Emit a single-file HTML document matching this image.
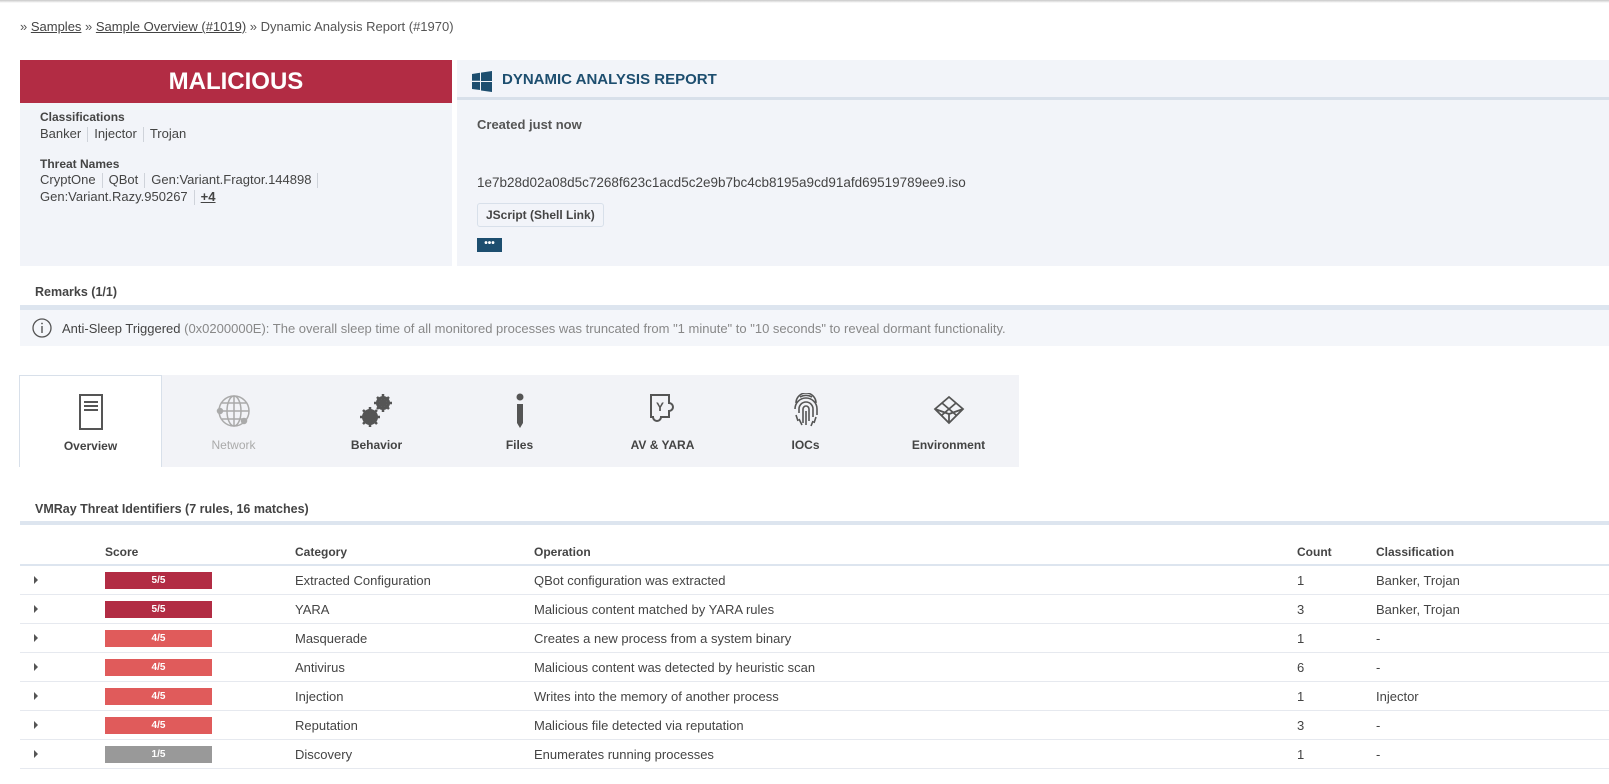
<!DOCTYPE html>
<html><head><meta charset="utf-8"><style>
*{margin:0;padding:0;box-sizing:border-box}
body{width:1609px;height:784px;overflow:hidden;background:#fff;font-family:"Liberation Sans",Arial,sans-serif;color:#444;position:relative;font-size:12px}
.a{position:absolute;white-space:nowrap}
.topsh{position:absolute;left:0;top:0;width:1609px;height:3px;background:linear-gradient(#c8c8c8,#fff)}
a{color:#444}
.sep{display:inline-block;width:1px;height:15px;background:#cfd3da;vertical-align:middle;margin:0 6px}
.b{font-weight:bold}
.tab{position:absolute;top:375px;height:92px;width:143px;text-align:center;font-size:12px;color:#444;font-weight:bold}
.tab svg{position:absolute;left:50%;transform:translateX(-50%);top:18px}
.tab span{position:absolute;left:0;right:0;top:63px}
.row{position:absolute;left:20px;width:1589px;height:29px;border-bottom:1px solid #e6e9ef;font-size:13px;color:#444}
.row div{position:absolute;top:7px;white-space:nowrap}
.sc{top:6px!important;left:85px;width:107px;height:17px;color:#fff;font-size:10px;font-weight:bold;text-align:center;line-height:17px}
.arr{left:14px;top:10px!important;width:0;height:0;border-left:4px solid #555;border-top:4px solid transparent;border-bottom:4px solid transparent}
</style></head><body>
<div class="topsh"></div>
<div class="a" style="left:20px;top:19px;font-size:13px;color:#555">» <a href="#">Samples</a> » <a href="#">Sample Overview (#1019)</a> » Dynamic Analysis Report (#1970)</div>

<div class="a" style="left:20px;top:60px;width:432px;height:206px;background:#f2f4f9"></div>
<div class="a" style="left:20px;top:60px;width:432px;height:43px;background:#b22c44;color:#fff;font-size:24px;font-weight:bold;text-align:center;line-height:43px">MALICIOUS</div>
<div class="a b" style="left:40px;top:110px;font-size:12px">Classifications</div>
<div class="a" style="left:40px;top:126px;font-size:13px">Banker<span class="sep"></span>Injector<span class="sep"></span>Trojan</div>
<div class="a b" style="left:40px;top:157px;font-size:12px">Threat Names</div>
<div class="a" style="left:40px;top:172px;font-size:13px">CryptOne<span class="sep"></span>QBot<span class="sep"></span>Gen:Variant.Fragtor.144898<span class="sep"></span></div>
<div class="a" style="left:40px;top:189px;font-size:13px">Gen:Variant.Razy.950267<span class="sep"></span><a href="#" class="b">+4</a></div>

<div class="a" style="left:457px;top:60px;width:1152px;height:206px;background:#f2f4f9"></div>
<div class="a" style="left:457px;top:97px;width:1152px;height:3px;background:#d8e0ea"></div>
<svg class="a" style="left:472px;top:71px" width="20" height="21" viewBox="0 0 20 21"><path d="M0 3l8-1.2v8H0zM9 1.6L20 0v10H9zM0 11h8v8L0 18zM9 11h11v10l-11-1.5z" fill="#1d4e6f"/></svg>
<div class="a b" style="left:502px;top:71px;font-size:15px;color:#1d4e6f">DYNAMIC ANALYSIS REPORT</div>
<div class="a b" style="left:477px;top:117px;font-size:13px;color:#555">Created just now</div>
<div class="a" style="left:477px;top:175px;font-size:13.5px;color:#444">1e7b28d02a08d5c7268f623c1acd5c2e9b7bc4cb8195a9cd91afd69519789ee9.iso</div>
<div class="a b" style="left:477px;top:203px;height:24px;padding:0 8px;border:1px solid #d8e0ea;border-radius:3px;background:#f2f4f9;line-height:22px;font-size:12px">JScript (Shell Link)</div>
<div class="a" style="left:477px;top:238px;width:25px;height:14px;background:#1d4e6f;color:#fff;font-size:10px;line-height:11px;text-align:center;font-weight:bold">•••</div>

<div class="a b" style="left:35px;top:285px;font-size:12.5px;color:#444">Remarks (1/1)</div>
<div class="a" style="left:20px;top:305px;width:1589px;height:5px;background:#dde5ef"></div>
<div class="a" style="left:20px;top:310px;width:1589px;height:36px;background:#f4f6fa"></div>
<svg class="a" style="left:32px;top:318px" width="20" height="20" viewBox="0 0 20 20"><circle cx="10" cy="10" r="9" fill="none" stroke="#555" stroke-width="1.3"/><rect x="9.3" y="8" width="1.4" height="7" fill="#555"/><circle cx="10" cy="5.5" r="0.9" fill="#555"/></svg>
<div class="a" style="left:62px;top:321px;font-size:13px;color:#444">Anti-Sleep Triggered <span style="color:#888">(0x0200000E): The overall sleep time of all monitored processes was truncated from "1 minute" to "10 seconds" to reveal dormant functionality.</span></div>

<div class="a" style="left:162px;top:375px;width:857px;height:92px;background:#f2f3f7"></div>
<div class="tab" style="left:19px;background:#fff;border:1px solid #d8e0ea;border-bottom:none">
<svg width="24" height="36" viewBox="0 0 24 36"><rect x="1" y="1" width="22" height="34" fill="none" stroke="#555" stroke-width="2"/><path d="M5 8h14M5 12h14M5 16h14" stroke="#555" stroke-width="2"/></svg><span>Overview</span></div>
<div class="tab" style="left:162px;color:#aaa;font-weight:normal">
<svg width="36" height="36" viewBox="0 0 36 36" fill="none" stroke="#aaa" stroke-width="1.5"><circle cx="18" cy="18" r="15"/><ellipse cx="18" cy="18" rx="7" ry="15"/><path d="M3 18h30M18 3v30M6 10h24M6 26h24"/><circle cx="4" cy="18" r="2.5" fill="#aaa"/><circle cx="28" cy="28" r="2.5" fill="#aaa"/></svg><span>Network</span></div>
<div class="tab" style="left:305px">
<svg width="36" height="36" viewBox="0 0 36 36"><circle cx="11" cy="24" r="8" fill="#555"/><circle cx="11" cy="24" r="3" fill="#f2f3f7"/><circle cx="24" cy="10" r="7" fill="#555"/><circle cx="24" cy="10" r="3.5" fill="#f2f3f7"/><text x="24" y="13" font-size="6" text-anchor="middle" fill="#555" font-family="Liberation Sans">U</text><path d="M11 14v20M1 24h20M4 17l14 14M18 17L4 31M24 1v18M15 10h18M18 4l12 12M30 4L18 16" stroke="#555" stroke-width="2.5"/></svg><span>Behavior</span></div>
<div class="tab" style="left:448px">
<svg width="12" height="36" viewBox="0 0 12 36"><circle cx="6" cy="4" r="3.5" fill="#555"/><path d="M3 11h6v19l-3 5-3-5z" fill="#555"/></svg><span>Files</span></div>
<div class="tab" style="left:591px">
<svg width="36" height="36" viewBox="0 0 36 36" fill="none" stroke="#555" stroke-width="2"><path d="M6 2h18v8a4 4 0 1 1 0 8v6h-8a4 4 0 1 1-8 0H6z"/><text x="15" y="18" font-size="12" text-anchor="middle" fill="#555" stroke="none" font-weight="bold" font-family="Liberation Sans">Y</text></svg><span>AV &amp; YARA</span></div>
<div class="tab" style="left:734px">
<svg width="28" height="36" viewBox="0 0 28 36" fill="none" stroke="#555" stroke-width="1.6"><path d="M4 10a10 10 0 0 1 20 0M3 16a11 11 0 0 1 22 0v6M7 20v-4a7 7 0 0 1 14 0v8M11 30V16a3 3 0 0 1 6 0v12M14 18v14M7 26l3 6M21 28l-2 5M24 24l-2 6M4 22l2 6M8 4a12 12 0 0 1 12 0"/></svg><span>IOCs</span></div>
<div class="tab" style="left:877px">
<svg width="36" height="36" viewBox="0 0 36 36" fill="none" stroke="#555" stroke-width="1.8"><path d="M18 4l14 12-14 14L4 16zM4 16l14 5 14-5M18 21v9M11 10l14 12M25 10L11 22"/></svg><span>Environment</span></div>

<div class="a b" style="left:35px;top:502px;font-size:12.5px;color:#444">VMRay Threat Identifiers (7 rules, 16 matches)</div>
<div class="a" style="left:20px;top:521px;width:1589px;height:4px;background:#dde5ef"></div>

<div class="a b" style="left:105px;top:545px;font-size:12px">Score</div>
<div class="a b" style="left:295px;top:545px;font-size:12px">Category</div>
<div class="a b" style="left:534px;top:545px;font-size:12px">Operation</div>
<div class="a b" style="left:1297px;top:545px;font-size:12px">Count</div>
<div class="a b" style="left:1376px;top:545px;font-size:12px">Classification</div>
<div class="a" style="left:20px;top:564px;width:1589px;height:2px;background:#dde5ef"></div>

<div class="row" style="top:566px"><div class="arr"></div><div class="sc" style="background:#b22c44">5/5</div><div style="left:275px">Extracted Configuration</div><div style="left:514px">QBot configuration was extracted</div><div style="left:1277px">1</div><div style="left:1356px">Banker, Trojan</div></div>
<div class="row" style="top:595px"><div class="arr"></div><div class="sc" style="background:#b22c44">5/5</div><div style="left:275px">YARA</div><div style="left:514px">Malicious content matched by YARA rules</div><div style="left:1277px">3</div><div style="left:1356px">Banker, Trojan</div></div>
<div class="row" style="top:624px"><div class="arr"></div><div class="sc" style="background:#e05b5b">4/5</div><div style="left:275px">Masquerade</div><div style="left:514px">Creates a new process from a system binary</div><div style="left:1277px">1</div><div style="left:1356px">-</div></div>
<div class="row" style="top:653px"><div class="arr"></div><div class="sc" style="background:#e05b5b">4/5</div><div style="left:275px">Antivirus</div><div style="left:514px">Malicious content was detected by heuristic scan</div><div style="left:1277px">6</div><div style="left:1356px">-</div></div>
<div class="row" style="top:682px"><div class="arr"></div><div class="sc" style="background:#e05b5b">4/5</div><div style="left:275px">Injection</div><div style="left:514px">Writes into the memory of another process</div><div style="left:1277px">1</div><div style="left:1356px">Injector</div></div>
<div class="row" style="top:711px"><div class="arr"></div><div class="sc" style="background:#e05b5b">4/5</div><div style="left:275px">Reputation</div><div style="left:514px">Malicious file detected via reputation</div><div style="left:1277px">3</div><div style="left:1356px">-</div></div>
<div class="row" style="top:740px"><div class="arr"></div><div class="sc" style="background:#999">1/5</div><div style="left:275px">Discovery</div><div style="left:514px">Enumerates running processes</div><div style="left:1277px">1</div><div style="left:1356px">-</div></div>
</body></html>
